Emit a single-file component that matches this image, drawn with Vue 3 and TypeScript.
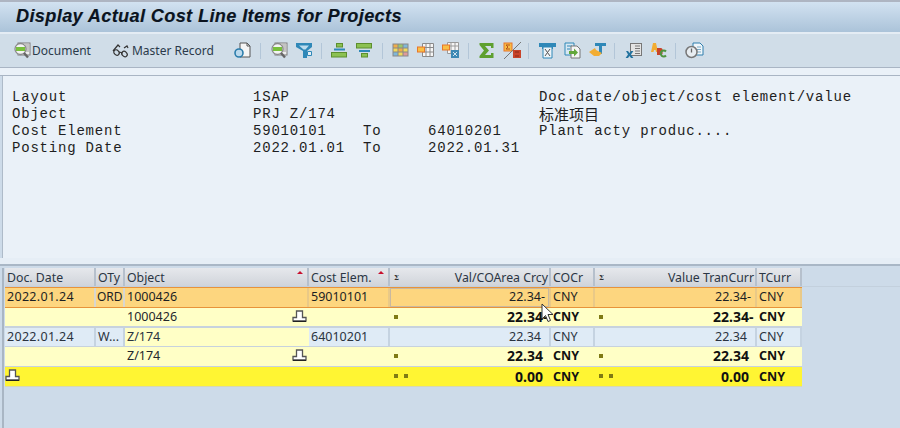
<template>
  <div class="screen">
    <header class="titlebar">
      <h1>Display Actual Cost Line Items for Projects</h1>
    </header>

    <nav class="toolbar">
      <button class="textbtn doc">
        <svg viewBox="0 0 17 17" width="17" height="17">
          <rect x="4" y="1" width="12" height="12" fill="#eee" stroke="#7d7d7d" />
          <path d="M11 3h4M11 5h4M11 7h4M11 9h4" stroke="#999" />
          <circle cx="6.500" cy="7" r="5.500" fill="#f4f4f4" stroke="#8a8a8a" stroke-width="1.300" />
          <rect x="2" y="5" width="9" height="4" fill="#78c03c" />
          <path d="M10 11l4 4.500" stroke="#666" stroke-width="2.400" />
        </svg>
        Document
      </button>
      <button class="textbtn master">
        <svg viewBox="0 0 19 17" width="19" height="17" fill="none" stroke="#333" stroke-width="1.200">
          <path d="M1 9l5-6 2 2M7 10l4 1M12 6l3-2 1 2" />
          <ellipse cx="4.500" cy="10.500" rx="3" ry="2.400" transform="rotate(45 4.500 10.500)" />
          <ellipse cx="12.500" cy="12" rx="3" ry="2.400" transform="rotate(45 12.500 12)" />
        </svg>
        Master Record
      </button>

      <div class="icon first">
        <svg viewBox="0 0 17 17">
          <path d="M6 1h7l3 3v11H6z" fill="#f5f5f5" stroke="#555" />
          <path d="M13 1v3h3" fill="none" stroke="#555" />
          <circle cx="5" cy="11" r="4" fill="#bcd9ec" stroke="#2b7cab" stroke-width="1.600" />
        </svg>
      </div>
      <i class="sep"></i>

      <div class="icon">
        <svg viewBox="0 0 17 17">
          <rect x="4" y="1" width="12" height="12" fill="#eee" stroke="#7d7d7d" />
          <path d="M11 3h4M11 5h4M11 7h4M11 9h4" stroke="#999" />
          <circle cx="6.500" cy="7" r="5.500" fill="#f4f4f4" stroke="#8a8a8a" stroke-width="1.300" />
          <rect x="2" y="5" width="9" height="4" fill="#78c03c" />
          <path d="M10 11l4 4.500" stroke="#666" stroke-width="2.400" />
        </svg>
      </div>
      <div class="icon">
        <svg viewBox="0 0 17 17">
          <path d="M0 1h16v4l-5 4v7H7V9L0 5z" fill="#2f88b8" />
          <path d="M3 3.500h10L9.500 7.500h-2z" fill="#bcdcee" />
          <path d="M11.500 9.500h4v4h-4z" fill="#e4eef5" stroke="#2f88b8" />
        </svg>
      </div>
      <i class="sep"></i>

      <div class="icon">
        <svg viewBox="0 0 17 17">
          <rect x="5.500" y="1.500" width="6" height="3.500" fill="#8cc152" stroke="#5d8f2e" />
          <rect x="3" y="6.500" width="11" height="2" fill="#2f88b8" />
          <rect x="0.500" y="10.500" width="15" height="4.500" fill="#8cc152" stroke="#5d8f2e" />
        </svg>
      </div>
      <div class="icon">
        <svg viewBox="0 0 17 17">
          <rect x="0.500" y="1.500" width="15" height="4.500" fill="#8cc152" stroke="#5d8f2e" />
          <rect x="3" y="8" width="11" height="2" fill="#2f88b8" />
          <rect x="5.500" y="11.500" width="6" height="3.500" fill="#8cc152" stroke="#5d8f2e" />
        </svg>
      </div>
      <i class="sep"></i>

      <div class="icon">
        <svg viewBox="0 0 17 17">
          <rect x="0.500" y="1.500" width="16" height="13" fill="#888" />
          <rect x="1.500" y="2.500" width="4" height="3" fill="#f0ad4a" />
          <rect x="6.500" y="2.500" width="4" height="3" fill="#9cc76a" />
          <rect x="11.500" y="2.500" width="4" height="3" fill="#7fb8d8" />
          <rect x="1.500" y="6.500" width="4" height="3" fill="#f2d95c" />
          <rect x="6.500" y="6.500" width="4" height="3" fill="#f0ad4a" />
          <rect x="11.500" y="6.500" width="4" height="3" fill="#f2d95c" />
          <rect x="1.500" y="10.500" width="4" height="3" fill="#7fb8d8" />
          <rect x="6.500" y="10.500" width="4" height="3" fill="#f2d95c" />
          <rect x="11.500" y="10.500" width="4" height="3" fill="#e09a9a" />
        </svg>
      </div>
      <div class="icon">
        <svg viewBox="0 0 17 17">
          <path d="M5.500 1.500h11v13h-11zM5.500 5.500h11M5.500 10h11M9 1.500v13M13 1.500v13" fill="#f6f6f6" stroke="#8a8a8a" />
          <rect x="0.500" y="5" width="7" height="5" fill="#f9c045" stroke="#e8762b" />
        </svg>
      </div>
      <div class="icon">
        <svg viewBox="0 0 17 17">
          <path d="M5.500 0.500h11v11h-11zM5.500 4h11M9 0.500v11M13 0.500v11" fill="#f6f6f6" stroke="#9a9a9a" />
          <rect x="0.500" y="3" width="7" height="5" fill="#f9c045" stroke="#e8762b" />
          <rect x="9" y="8" width="8" height="8" fill="#3b88b4" />
          <path d="M11 10l4 4M15 10l-4 4" stroke="#cfe3ef" />
        </svg>
      </div>
      <i class="sep"></i>

      <div class="icon">
        <svg viewBox="0 0 17 17">
          <path d="M1.500 1h14v5h-2.500V4H7l4 4.500L7 13h6v-2h2.500v5h-14v-2L6 8.500 1.500 3z" fill="#5ea02f" />
        </svg>
      </div>
      <div class="icon">
        <svg viewBox="0 0 19 17" class="wide">
          <rect x="1" y="1" width="8" height="8" fill="#f7bc45" stroke="#e8762b" />
          <path d="M3 3h4M3 7h4M3 3l2 2-2 2" fill="none" stroke="#b5501a" />
          <rect x="10" y="8" width="8" height="8" fill="#c8432a" />
          <path d="M12 10h4M12 14h4" stroke="#8a2a18" />
          <path d="M1 17L18 0" stroke="#777" />
        </svg>
      </div>
      <i class="sep"></i>

      <div class="icon">
        <svg viewBox="0 0 17 17">
          <path d="M0 1h17v4h-3v2H3V5H0z" fill="#2f88b8" />
          <path d="M4 5h9v11H4z" fill="#eef4f8" stroke="#2f88b8" />
          <path d="M6 7l5 7M11 7l-5 7" stroke="#555" />
        </svg>
      </div>
      <div class="icon">
        <svg viewBox="0 0 17 17">
          <path d="M1 1h9v12H1z" fill="#d8e8f2" stroke="#2f88b8" />
          <path d="M3 4h5M3 7h3" stroke="#2f88b8" />
          <path d="M7 4h6l3 3v9H7z" fill="#f5f5f5" stroke="#777" />
          <path d="M5 9h5V6.500l4 4-4 4V12H5z" fill="#62a63a" />
        </svg>
      </div>
      <div class="icon">
        <svg viewBox="0 0 17 17">
          <path d="M6 1h11v3h-4v8h-3V4H6z" fill="#2f88b8" />
          <path d="M0 10l6-4 1 2 6 3-3 3H5z" fill="#f2ad33" />
        </svg>
      </div>
      <i class="sep"></i>

      <div class="icon">
        <svg viewBox="0 0 17 17">
          <rect x="5.500" y="1.500" width="11" height="12" fill="#e4e4e4" stroke="#777" />
          <path d="M10 4h5M10 6.500h5M10 9h5M10 11.500h5" stroke="#777" />
          <path d="M1 9h2l1.500 2L6 9h2.400L6 12.500 8.400 16H6l-1.500-2L3 16H.6L3 12.500z" fill="#23739f" />
        </svg>
      </div>
      <div class="icon">
        <svg viewBox="0 0 17 17">
          <path d="M1 10L3 1h3l2 9H6L5.500 8h-1.500L3.500 10z" fill="#f2ad33" />
          <path d="M7 6h4a2 2 0 0 1 1 3.500 2 2 0 0 1-1 3.500H7z" fill="#c8432a" />
          <path d="M16 9.500a3 3 0 1 0 0 4" fill="none" stroke="#4f9440" stroke-width="2" />
        </svg>
      </div>
      <i class="sep"></i>

      <div class="icon">
        <svg viewBox="0 0 19 17" class="wide">
          <path d="M8 1h7l3 3v9H8z" fill="#f0f6fa" stroke="#2f7fad" />
          <path d="M12 5h4M12 7.500h4M12 10h4" stroke="#7aa9c4" />
          <circle cx="6.500" cy="10" r="5.500" fill="#e8edf1" stroke="#777" stroke-width="1.500" />
          <path d="M6.500 6.500v4" stroke="#666" stroke-width="1.300" />
        </svg>
      </div>
    </nav>

    <div class="gap"></div>

    <section class="summary">
      <template v-for="(line, i) in summary" :key="i">
        <span v-for="(text, j) in line" :key="j" :class="{ cjk: i === 1 && j === 4 }">{{ text }}</span>
      </template>
    </section>

    <div class="splitter"></div>

    <main class="listarea">
      <div class="grid">
        <div class="row head">
          <div v-for="col in columns" :key="col.label" class="cell" :class="{ right: col.sum }">
            <span v-if="col.sum" class="sigma">Σ</span>
            {{ col.label }}
            <i v-if="col.sorted" class="sorted"></i>
          </div>
        </div>

        <div v-for="(row, r) in rows" :key="r" class="row" :class="row.kind">
          <div
            v-for="(cell, c) in row.cells"
            :key="c"
            class="cell"
            :class="{ right: c === 4 || c === 6, key: row.kind === 'item' && c === 2, focus: r === 0 && c === 4 }"
          >
            <span v-if="cell.marks" class="marks">
              <i v-for="m in cell.marks" :key="m"></i>
            </span>
            <svg v-if="cell.sub" class="subicon" viewBox="0 0 15 12" width="15" height="12">
              <path d="M4.500 1h6v6.500h3.500V11H1V7.500h3.500z" fill="#fff" stroke="#555" stroke-width="1.300" />
              <path d="M1 11.500h13" stroke="#222" stroke-width="1.200" />
            </svg>
            {{ cell.text }}<span v-if="c === 4 || c === 6" class="sign">{{ cell.neg ? '-' : '' }}</span>
          </div>
        </div>
      </div>

      <svg class="pointer" viewBox="0 0 14 20" width="14" height="20">
        <path d="M1 1v15l3.500-3.500 2.500 6 2.500-1-2.500-6H12z" fill="#fff" stroke="#333" />
      </svg>
    </main>
  </div>
</template>

<script setup lang="ts">
interface Column {
  label: string;
  sum?: boolean;
  sorted?: boolean;
}

interface Cell {
  text?: string;
  neg?: boolean;
  marks?: number;
  sub?: boolean;
}

interface Row {
  kind: 'hit' | 'subtotal' | 'item' | 'total';
  cells: Cell[];
}

const summary: string[][] = [
  ['Layout', '1SAP', '', '', 'Doc.date/object/cost element/value'],
  ['Object', 'PRJ Z/174', '', '', '标准项目'],
  ['Cost Element', '59010101', 'To', '64010201', 'Plant acty produc....'],
  ['Posting Date', '2022.01.01', 'To', '2022.01.31', ''],
];

const columns: Column[] = [
  { label: 'Doc. Date' },
  { label: 'OTy' },
  { label: 'Object', sorted: true },
  { label: 'Cost Elem.', sorted: true },
  { label: 'Val/COArea Crcy', sum: true },
  { label: 'COCr' },
  { label: 'Value TranCurr', sum: true },
  { label: 'TCurr' },
];

const rows: Row[] = [
  {
    kind: 'hit',
    cells: [
      { text: '2022.01.24' }, { text: 'ORD' }, { text: '1000426' }, { text: '59010101' },
      { text: '22.34', neg: true }, { text: 'CNY' }, { text: '22.34', neg: true }, { text: 'CNY' },
    ],
  },
  {
    kind: 'subtotal',
    cells: [
      {}, {}, { text: '1000426', sub: true }, {},
      { text: '22.34', neg: true, marks: 1 }, { text: 'CNY' }, { text: '22.34', neg: true, marks: 1 }, { text: 'CNY' },
    ],
  },
  {
    kind: 'item',
    cells: [
      { text: '2022.01.24' }, { text: 'W...' }, { text: 'Z/174' }, { text: '64010201' },
      { text: '22.34' }, { text: 'CNY' }, { text: '22.34' }, { text: 'CNY' },
    ],
  },
  {
    kind: 'subtotal',
    cells: [
      {}, {}, { text: 'Z/174', sub: true }, {},
      { text: '22.34', marks: 1 }, { text: 'CNY' }, { text: '22.34', marks: 1 }, { text: 'CNY' },
    ],
  },
  {
    kind: 'total',
    cells: [
      { sub: true }, {}, {}, {},
      { text: '0.00', marks: 2 }, { text: 'CNY' }, { text: '0.00', marks: 2 }, { text: 'CNY' },
    ],
  },
];
</script>

<style>
html,
body {
  margin: 0;
  overflow: hidden;
}
</style>

<style scoped>
* {
  box-sizing: border-box;
}
.screen {
  width: 900px;
  height: 428px;
  display: flex;
  flex-direction: column;
  background: #cddbe9;
  font-family: "Noto Sans", "Liberation Sans", sans-serif;
  font-size: 12.500px;
  color: #1f2a36;
  overflow: hidden;
}
.titlebar {
  height: 34px;
  padding: 0 0 2px 16px;
  display: flex;
  align-items: center;
  border-top: 2px solid #aeb5c2;
  border-bottom: 2px solid #e4ecf4;
  background: linear-gradient(#d2e2f1, #abc3d9);
}
.titlebar h1 {
  margin: 0;
  font-family: "Liberation Sans", sans-serif;
  font-size: 18px;
  font-style: italic;
  font-weight: 700;
  letter-spacing: 0.430px;
  color: #0b1420;
  text-shadow: 0.500px 0 0 rgba(40, 50, 70, 0.4);
}
.toolbar {
  height: 34px;
  padding-left: 14px;
  display: flex;
  align-items: center;
  gap: 8px;
  background: #d0dde8;
  border-bottom: 1px solid #a9b5c4;
}
.textbtn {
  display: flex;
  align-items: center;
  gap: 1px;
  padding: 0;
  border: 0;
  background: none;
  font: inherit;
  font-size: 12px;
  color: #2b3a4a;
}
.doc {
  margin-right: 13px;
}
.master {
  margin-right: 12px;
}
.icon {
  width: 17px;
  height: 17px;
  flex: none;
}
.icon.first {
  margin-right: 1px;
}
.icon svg {
  display: block;
  width: 17px;
  height: 17px;
  overflow: visible;
}
.icon svg.wide {
  width: 19px;
}
.sep {
  width: 1px;
  height: 16px;
  margin: 0 1.500px 0 0.300px;
  flex: none;
  background: #b3c6d8;
}
.gap {
  height: 8px;
  background: #eaf1f8;
  border-bottom: 1px solid #a9b5c4;
}
.summary {
  height: 182px;
  margin-left: 2px;
  padding: 12px 0 0 9px;
  display: grid;
  grid-template-columns: 241px 110px 65px 111px 1fr;
  grid-auto-rows: 17px;
  align-content: start;
  align-items: center;
  background: #eaf1f8;
  border-left: 1px solid #aebbc9;
  font-family: "Liberation Mono", monospace;
  font-size: 14px;
  letter-spacing: 0.800px;
  color: #1e1e22;
  white-space: pre;
}
.cjk {
  font-family: "Noto Sans CJK SC", sans-serif;
  font-size: 15px;
  letter-spacing: 0;
}
.splitter {
  height: 8px;
  background: #e6eef6;
  border-bottom: 2px solid #a9b7c6;
}
.listarea {
  position: relative;
  flex: 1;
  padding: 2px 0 0 2px;
  background: #cddbe9;
}
.grid {
  height: 100%;
  padding-left: 1px;
  border-left: 2px solid #a9b6c4;
}
.row {
  display: grid;
  grid-template-columns: 91px 29px 184px 81px 161px 44px 162px 45px;
  height: 20px;
  width: 797px;
  border-bottom: 1px solid #c7d2de;
}
.row.head {
  position: relative;
  width: auto;
  height: 19px;
  border-bottom: 1px solid #c3d0dd;
}
.head .cell {
  background: linear-gradient(#e6e8ec, #d0d4da);
  border-right: 2px solid #b6c0cc;
  color: #2b3644;
  font-size: 12.300px;
}
.cell {
  position: relative;
  display: block;
  padding: 0 2px;
  line-height: 19px;
  white-space: nowrap;
  overflow: hidden;
  border-right: 2px solid transparent;
}
.cell.right {
  text-align: right;
  padding-right: 1px;
}
.hit .cell:first-child,
.item .cell:first-child {
  letter-spacing: 0.300px;
}
.hit .cell:nth-child(2) {
  padding: 0 0 0 1px;
  font-size: 12px;
}
.sign {
  display: inline-block;
  width: 7px;
  text-align: left;
}
.subtotal .right,
.total .right {
  font-size: 14px;
}
.subtotal .sign,
.total .sign {
  width: 5px;
}
.sigma {
  position: absolute;
  left: 4px;
  top: 0;
  font-family: "DejaVu Serif", serif;
  font-size: 7px;
  font-weight: 700;
  color: #333;
}
.sorted {
  position: absolute;
  right: 4px;
  top: 3px;
  border: 3px solid transparent;
  border-top: 0;
  border-bottom: 3px solid #c8102e;
}
.hit {
  background: #fdd67f;
  border-top: 1px solid #e8933a;
  border-bottom: 1px solid #e8933a;
  height: 21px;
  color: #1c1f23;
}
.hit .cell {
  line-height: 18px;
  border-right-color: #e9c987;
}
.hit .cell:nth-child(2) {
  border-right-color: #d8d6d0;
}
.hit .cell:nth-child(1) {
  border-right-color: #d8d6d0;
}
.subtotal {
  height: 19px;
  background: #ffffc6;
  font-weight: 700;
  color: #111;
}
.subtotal .cell:nth-child(3) {
  font-weight: 400;
  color: #25282c;
}
.subtotal .cell {
  line-height: 18px;
}
.item {
  background: #dfebf6;
  color: #2a3340;
  border-top: 1px solid #c7d2de;
}
.item .cell {
  line-height: 18px;
  border-right-color: #c5d3e1;
}
.item .cell.key {
  background: #ffffc6;
  border-right-color: transparent;
}
.item + .subtotal {
  height: 20px;
}
.total {
  background: #fff533;
  font-weight: 700;
  color: #111;
  border-bottom-color: #d8d8b0;
}
.focus {
  background-color: #fdd67f;
  background-image:
    linear-gradient(#b8323c, #b8323c), linear-gradient(#b8323c, #b8323c),
    linear-gradient(#b8323c, #b8323c), linear-gradient(#b8323c, #b8323c),
    linear-gradient(#b8323c, #b8323c), linear-gradient(#b8323c, #b8323c),
    linear-gradient(#b8323c, #b8323c), linear-gradient(#b8323c, #b8323c);
  background-repeat: no-repeat;
  background-size: 5px 1px, 1px 5px, 5px 1px, 1px 5px, 5px 1px, 1px 5px, 5px 1px, 1px 5px;
  background-position: 0 0, 0 0, 100% 0, 100% 0, 0 100%, 0 100%, 100% 100%, 100% 100%;
  box-shadow: inset 0 0 0 1px #c9b9a0;
}
.marks {
  position: absolute;
  left: 4px;
  top: 7px;
  display: flex;
  gap: 6px;
}
.marks i {
  width: 4px;
  height: 4px;
  background: #7f7a14;
}
.subicon {
  position: absolute;
  right: 0;
  top: 2px;
}
.total .subicon {
  left: 0;
  right: auto;
}
.pointer {
  position: absolute;
  left: 541px;
  top: 37px;
}
</style>
